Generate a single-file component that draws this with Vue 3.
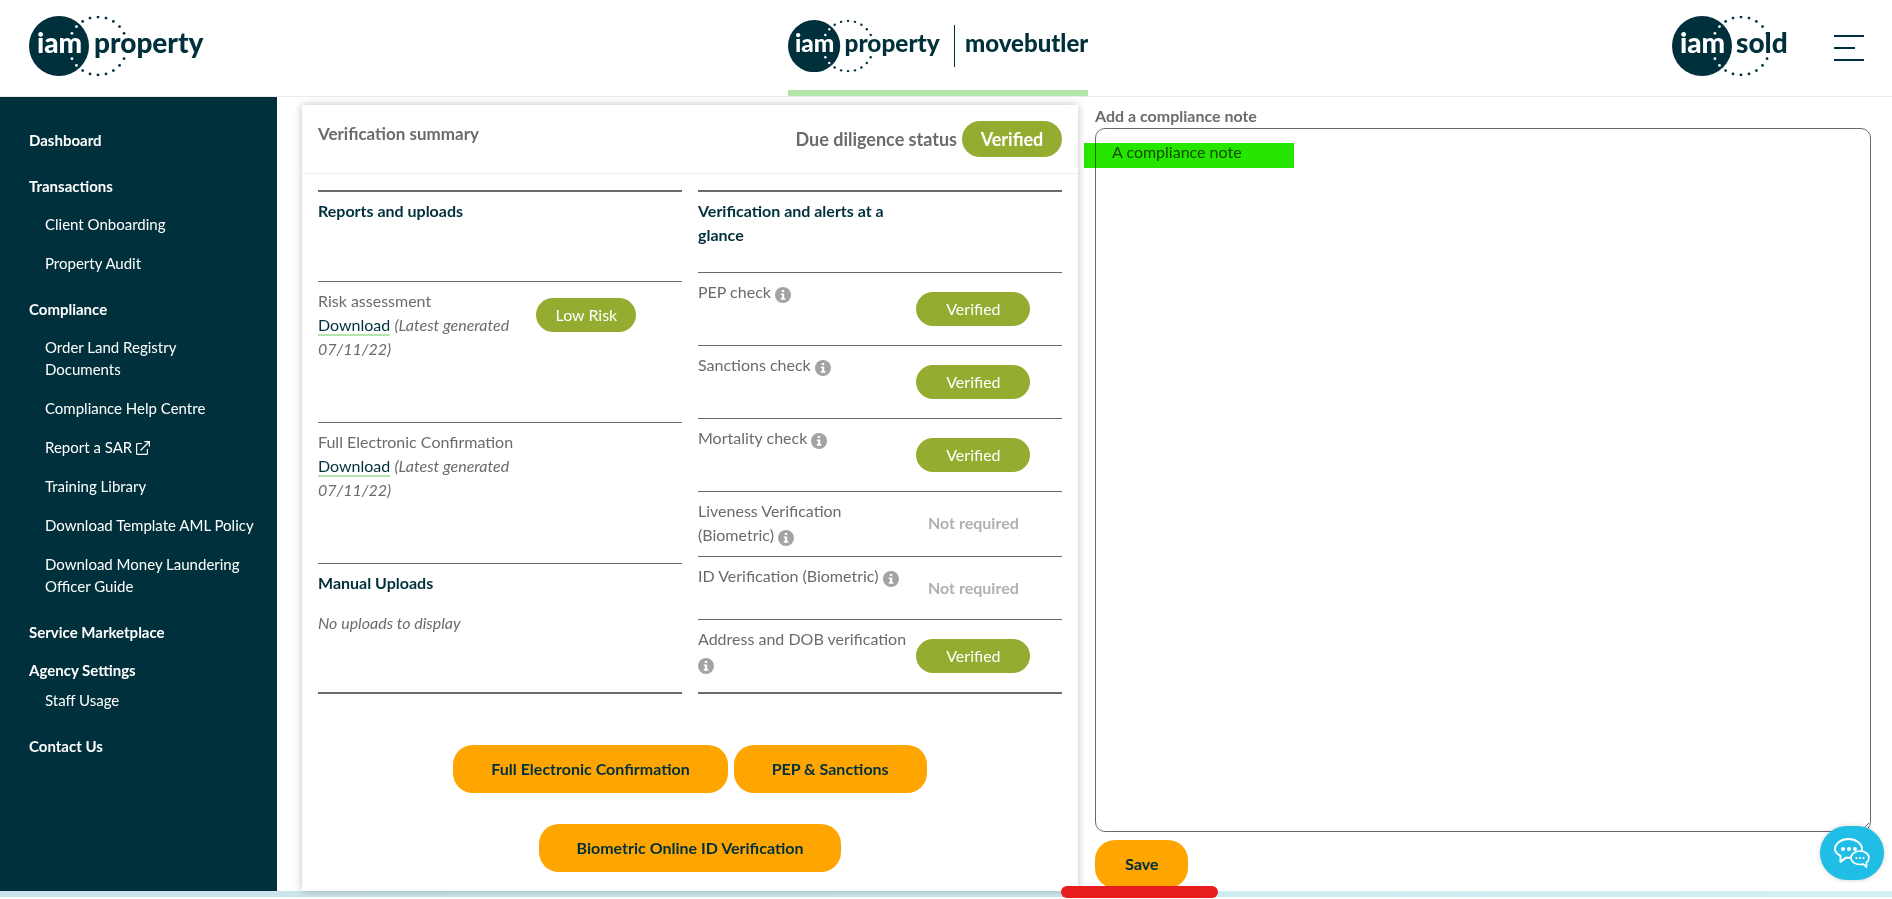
<script setup>
import { ref } from 'vue'

const note = ref('A compliance note')

const nav = [
  { title: 'Dashboard', items: [] },
  { title: 'Transactions', items: [{ label: 'Client Onboarding' }, { label: 'Property Audit' }] },
  {
    title: 'Compliance',
    items: [
      { label: 'Order Land Registry\nDocuments' },
      { label: 'Compliance Help Centre' },
      { label: 'Report a SAR', external: true },
      { label: 'Training Library' },
      { label: 'Download Template AML Policy' },
      { label: 'Download Money Laundering\nOfficer Guide' },
    ],
  },
  { title: 'Service Marketplace', items: [], tight: true },
  { title: 'Agency Settings', items: [{ label: 'Staff Usage' }], compact: true },
  { title: 'Contact Us', items: [] },
]

const reports = [
  { label: 'Risk assessment', status: 'Low Risk' },
  { label: 'Full Electronic Confirmation', status: '' },
]

const checks = [
  { label: 'PEP check', ok: true },
  { label: 'Sanctions check', ok: true },
  { label: 'Mortality check', ok: true },
  { label: 'Liveness Verification (Biometric)', ok: false, size: 'medium' },
  { label: 'ID Verification (Biometric)', ok: false, size: 'short' },
  { label: 'Address and DOB verification', ok: true },
]

// Dotted ring that overlaps the solid disc of each logo.
const dots = []
for (const base of [0, 180]) {
  for (let a = -64; a <= 64; a += 16) {
    const t = ((base + a) * Math.PI) / 180
    const x = 69 + 29 * Math.sin(t)
    const y = 30 - 29 * Math.cos(t)
    dots.push({ x, y, light: Math.hypot(x - 30, y - 30) < 30 })
  }
}
</script>

<template>
  <div class="shell">
    <header class="top">
      <a href="#" class="brand" aria-label="iam property">
        <svg width="175" height="60" viewBox="0 0 175 60">
          <circle cx="30" cy="30" r="30" class="dark" />
          <circle v-for="(d, i) in dots" :key="i" :cx="d.x" :cy="d.y" r="1.4" :class="d.light ? 'light' : 'dark'" />
          <text x="8" y="37" class="word light">iam</text>
          <text x="65" y="37" class="word dark">property</text>
        </svg>
      </a>
      <a href="#" class="brand current" aria-label="iam property movebutler">
        <svg width="300" height="52" viewBox="0 0 300 52">
          <g transform="scale(0.87)">
            <circle cx="30" cy="30" r="30" class="dark" />
            <circle v-for="(d, i) in dots" :key="i" :cx="d.x" :cy="d.y" r="1.4" :class="d.light ? 'light' : 'dark'" />
            <text x="8" y="37" class="word light">iam</text>
            <text x="65" y="37" class="word dark">property</text>
          </g>
          <rect x="166" y="5" width="1" height="42" class="dark" />
          <text x="177" y="32" class="word small dark">movebutler</text>
        </svg>
      </a>
      <div class="right">
        <a href="#" class="brand" aria-label="iam sold">
          <svg width="120" height="60" viewBox="0 0 120 60">
            <circle cx="30" cy="30" r="30" class="dark" />
            <circle v-for="(d, i) in dots" :key="i" :cx="d.x" :cy="d.y" r="1.4" :class="d.light ? 'light' : 'dark'" />
            <text x="8" y="37" class="word light">iam</text>
            <text x="64" y="37" class="word dark">sold</text>
          </svg>
        </a>
        <button class="menu" aria-label="Menu">
          <svg width="30" height="26" viewBox="0 0 30 26">
            <path d="M0 1h30M0 13h21M0 25h30" stroke="#00303c" stroke-width="2" />
          </svg>
        </button>
      </div>
    </header>

    <div class="body">
      <nav class="side">
        <section v-for="g in nav" :key="g.title" :class="{ tight: g.tight, compact: g.compact }">
          <a href="#" class="group">{{ g.title }}</a>
          <ul v-if="g.items.length">
            <li v-for="it in g.items" :key="it.label">
              <a href="#">{{ it.label }}
                <svg v-if="it.external" width="14" height="14" viewBox="0 0 14 14" fill="none" stroke="#fff" stroke-width="1.2">
                  <path d="M6 2.5H1.6a1 1 0 0 0-1 1v8.9a1 1 0 0 0 1 1h8.800a1 1 0 0 0 1-1V8M4.500 9.500 13 1M8.500.6h4.900v4.900" />
                </svg>
              </a>
            </li>
          </ul>
        </section>
      </nav>

      <main class="main">
        <section class="card">
          <div class="card-head">
            <h2>Verification summary</h2>
            <div class="due">Due diligence status <span class="pill large">Verified</span></div>
          </div>
          <div class="tables">
            <table>
              <thead>
                <tr class="head-tall"><th class="label">Reports and uploads</th><th></th></tr>
              </thead>
              <tbody>
                <tr v-for="r in reports" :key="r.label" class="report">
                  <td>{{ r.label }}<br><a href="#" class="link">Download</a> <em>(Latest generated</em> <em>07/11/22)</em></td>
                  <td class="state"><span v-if="r.status" class="pill low">{{ r.status }}</span></td>
                </tr>
                <tr class="manual">
                  <td colspan="2"><h3>Manual Uploads</h3><em>No uploads to display</em></td>
                </tr>
              </tbody>
            </table>
            <table>
              <thead>
                <tr class="head"><th class="label">Verification and alerts at a glance</th><th></th></tr>
              </thead>
              <tbody>
                <tr v-for="c in checks" :key="c.label" class="check" :class="c.size">
                  <td>{{ c.label }}
                    <svg class="info" width="16" height="16" viewBox="0 0 16 16">
                      <circle cx="8" cy="8" r="8" fill="#a3a3a3" />
                      <path d="M6.800 2.900h2.400v2.100H6.800zM5.800 6.400h3.400v4.600h1.100v1.700H5.800V11h1.100V8.100H5.800z" fill="#fff" />
                    </svg>
                  </td>
                  <td class="state">
                    <span v-if="c.ok" class="pill">Verified</span>
                    <span v-else class="muted">Not required</span>
                  </td>
                </tr>
              </tbody>
            </table>
          </div>
          <div class="actions">
            <div><button class="btn">Full Electronic Confirmation</button><button class="btn">PEP &amp; Sanctions</button></div>
            <div><button class="btn">Biometric Online ID Verification</button></div>
          </div>
        </section>

        <form class="note" @submit.prevent>
          <label for="note">Add a compliance note</label>
          <div class="field">
            <textarea id="note" v-model="note" spellcheck="false"></textarea>
            <span class="marker"></span>
          </div>
          <div class="save-row">
            <button class="btn save">Save</button>
            <span class="underline"></span>
          </div>
        </form>
      </main>
      <button class="chat" aria-label="Open chat">
        <svg width="36" height="30" viewBox="0 0 36 30" fill="none" stroke="#fff" stroke-width="2" stroke-linejoin="round" stroke-linecap="round">
          <path d="M17 19.500c-1.500.3-3.500.4-5 .1L6.500 24v-6.200C3.500 16.300 1 14 1 11 1 5.500 7 1 14.500 1S28 5.500 28 11v1" />
          <path d="M26 13c-5 0-9 3-9 6.800s4 6.700 9 6.700c1.200 0 2.200-.1 3.200-.4L32.500 29v-4.600c1.500-1.200 2.500-2.800 2.500-4.600C35 16 31 13 26 13z" stroke-width="1.700" />
          <g fill="#fff" stroke="none">
            <circle cx="9" cy="11" r="2" /><circle cx="15" cy="11" r="2" /><circle cx="21" cy="11" r="2" />
            <circle cx="22.500" cy="20" r="1.100" /><circle cx="26" cy="20" r="1.100" /><circle cx="29.500" cy="20" r="1.100" />
          </g>
        </svg>
      </button>
    </div>
    <div class="strip"></div>
  </div>
</template>

<style>
body {
  background: #fff;
}
</style>

<style scoped>
* {
  box-sizing: border-box;
}
.shell {
  display: flex;
  flex-direction: column;
  height: 100vh;
  padding-bottom: 2px;
  overflow: hidden;
  font: 16px/24px Lato, "Liberation Sans", sans-serif;
  color: #6b6b6d;
}
a {
  color: inherit;
  text-decoration: none;
}
button {
  border: 0;
  font: inherit;
  cursor: pointer;
}
.top {
  flex: none;
  display: flex;
  justify-content: space-between;
  height: 97px;
  padding: 0 28px 0 29px;
  border-bottom: 1px solid #ebebeb;
}
.brand {
  display: block;
  padding-top: 16px;
}
.brand svg {
  display: block;
}
.current {
  padding-top: 20px;
  border-bottom: 6px solid #b3e6a8;
}
.dark {
  fill: #00303c;
}
.light {
  fill: #fff;
}
.word {
  font-size: 28px;
  font-weight: 900;
}
.small {
  font-size: 24px;
}
.right {
  display: flex;
  gap: 42px;
}
.menu {
  align-self: flex-start;
  margin-top: 35px;
  padding: 0;
  background: none;
}
.menu svg {
  display: block;
}
.body {
  position: relative;
  flex: 1;
  min-height: 0;
  display: flex;
}
.side {
  flex: none;
  width: 277px;
  padding: 32px 12px 0 29px;
  background: #00303c;
  color: #fff;
  font-size: 15px;
  line-height: 22px;
}
.side section {
  margin-bottom: 24px;
}
.side .tight {
  margin-bottom: 16px;
}
.group {
  display: block;
  font-weight: 700;
}
.side ul {
  display: flex;
  flex-direction: column;
  gap: 17px;
  margin: 16px 0 0;
  padding: 0 0 0 16px;
  list-style: none;
}
.side .compact ul {
  margin-top: 8px;
}
.side li {
  white-space: pre-line;
}
.side li svg {
  vertical-align: -2px;
}
.main {
  flex: 1;
  min-width: 0;
  display: grid;
  grid-template-columns: 1fr 1fr;
  gap: 17px;
  padding: 8px 21px 0 25px;
}
.card {
  min-width: 0;
  box-shadow: 0 0 8px rgba(0, 0, 0, 0.25);
}
.card-head {
  display: flex;
  justify-content: space-between;
  padding: 16px;
  border-bottom: 1px solid #ececec;
  font-size: 18px;
  font-weight: 700;
}
h2 {
  margin: 0;
  font-size: 17px;
  line-height: 26px;
}
.due {
  display: flex;
  align-items: center;
  gap: 5px;
}
.pill {
  display: block;
  width: 114px;
  border-radius: 18px;
  background: #94ac30;
  color: #fff;
  line-height: 34px;
  text-align: center;
}
.pill.low {
  width: 100px;
}
.pill.large {
  width: 100px;
  line-height: 36px;
}
.tables {
  display: grid;
  grid-template-columns: 1fr 1fr;
  gap: 16px;
  padding: 16px;
}
table {
  width: 100%;
  table-layout: fixed;
  border-spacing: 0;
  border-top: 2px solid #6b6b6d;
  border-bottom: 2px solid #6b6b6d;
}
th,
td {
  padding: 7px 0 0;
  text-align: left;
  vertical-align: top;
}
th {
  color: #00303c;
}
td {
  border-top: 1px solid #6b6b6d;
}
.label {
  width: 60%;
}
.head-tall {
  height: 89px;
}
.head {
  height: 80px;
}
.report {
  height: 141px;
}
.manual {
  height: 129px;
}
.check {
  height: 73px;
}
.check.medium {
  height: 65px;
}
.check.short {
  height: 63px;
}
.check .state {
  padding-top: 19px;
}
.report .state {
  padding-top: 16px;
}
.muted {
  display: block;
  width: 114px;
  font-weight: 700;
  text-align: center;
  color: #b0b0b0;
}
h3 {
  margin: 0 0 16px;
  color: #00303c;
  font-size: 16px;
  line-height: 24px;
}
.link {
  border-bottom: 2px solid #b3e6a8;
  color: #00303c;
}
.info {
  vertical-align: -5px;
}
.actions {
  display: flex;
  flex-direction: column;
  gap: 31px;
  padding-top: 35px;
}
.actions div {
  display: flex;
  justify-content: center;
  gap: 6px;
}
.btn {
  padding: 0 38px;
  border-radius: 20px;
  background: #ffa500;
  color: #00303c;
  font-weight: 700;
  line-height: 48px;
}
.note {
  display: flex;
  flex-direction: column;
  min-width: 0;
}
.note label {
  height: 23px;
  line-height: 22px;
  font-weight: 700;
}
.field {
  position: relative;
  flex: 1;
}
textarea {
  display: block;
  width: 100%;
  height: 100%;
  padding: 11px 16px;
  border: 1px solid #6b6b6d;
  border-radius: 10px;
  background: #fff;
  color: #555;
  font: inherit;
  outline: 0;
}
.marker {
  position: absolute;
  top: 15px;
  left: -11px;
  width: 210px;
  height: 25px;
  background: #26e600;
  mix-blend-mode: multiply;
  pointer-events: none;
}
.save-row {
  position: relative;
  padding: 8px 0 3px;
}
.save {
  padding: 0 30px;
}
.underline {
  position: absolute;
  bottom: -7px;
  left: -34px;
  z-index: 2;
  width: 157px;
  height: 12px;
  border-radius: 6px;
  background: #e81c1c;
}
.chat {
  position: absolute;
  right: 8px;
  bottom: 11px;
  display: grid;
  place-items: center;
  width: 64px;
  height: 54px;
  border-radius: 27px;
  background: #20bee6;
  box-shadow: 0 0 4px rgba(0, 0, 0, 0.2);
}
.strip {
  flex: none;
  height: 6px;
  background: linear-gradient(90deg, #cbe3eb, #d0f0f6);
}
</style>
